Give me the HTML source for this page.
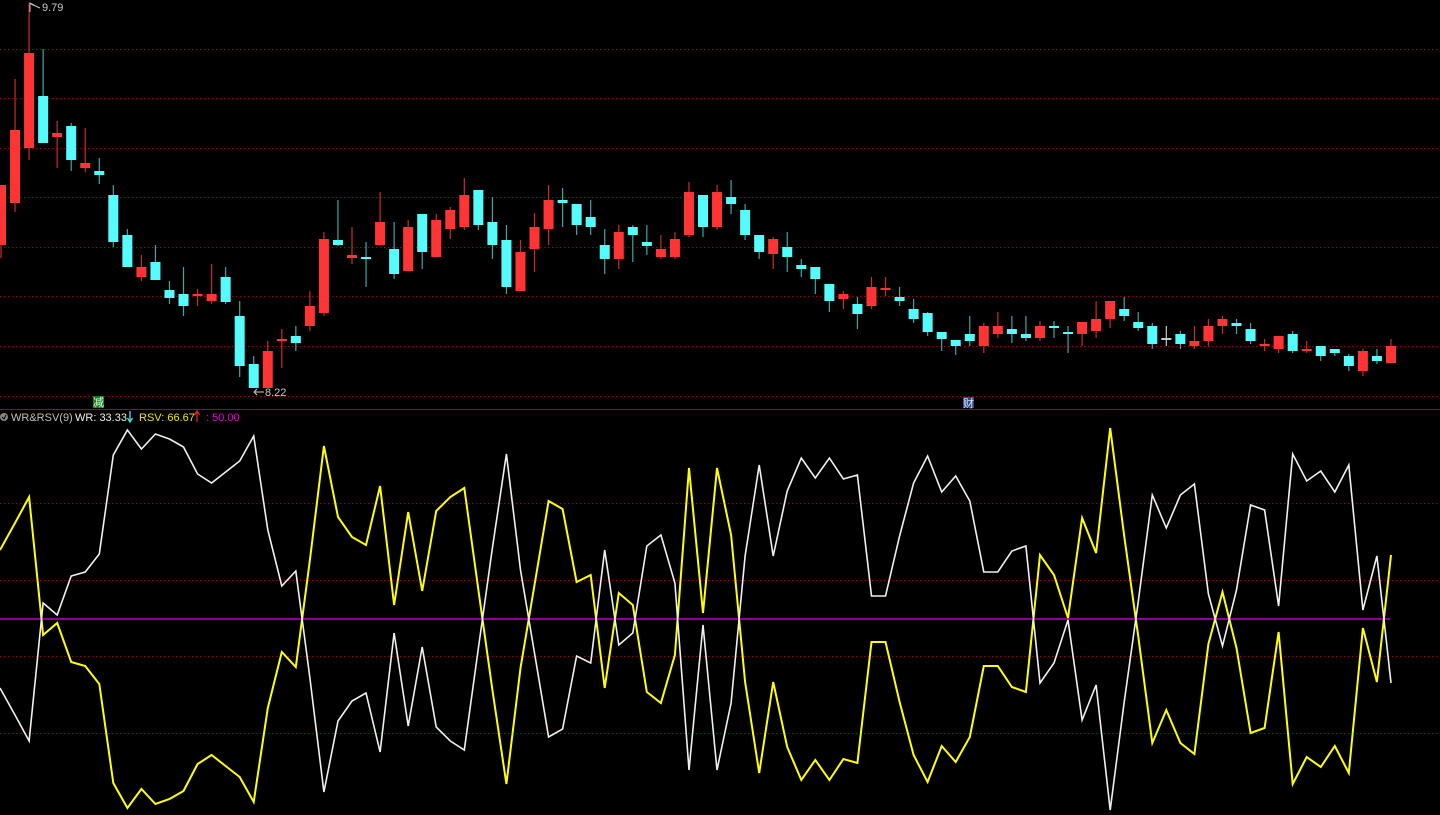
<!DOCTYPE html>
<html><head><meta charset="utf-8">
<style>
html,body{margin:0;padding:0;background:#000;width:1440px;height:815px;overflow:hidden}
svg{position:absolute;left:0;top:0}
.t{font-family:"Liberation Sans","Noto Sans CJK SC",sans-serif;font-size:11px}
</style></head><body>
<svg id="s" width="1440" height="815" xmlns="http://www.w3.org/2000/svg">
<g stroke="#a00000" stroke-width="1" stroke-dasharray="1.5,2.5">
<line x1="0" y1="49.5" x2="1440" y2="49.5"/><line x1="0" y1="98.5" x2="1440" y2="98.5"/>
<line x1="0" y1="148.5" x2="1440" y2="148.5"/><line x1="0" y1="197.5" x2="1440" y2="197.5"/>
<line x1="0" y1="247.5" x2="1440" y2="247.5"/><line x1="0" y1="296.5" x2="1440" y2="296.5"/>
<line x1="0" y1="346.5" x2="1440" y2="346.5"/><line x1="0" y1="396.5" x2="1440" y2="396.5"/>
<line x1="0" y1="503.5" x2="1440" y2="503.5"/><line x1="0" y1="580.5" x2="1440" y2="580.5"/>
<line x1="0" y1="656.5" x2="1440" y2="656.5"/><line x1="0" y1="733.5" x2="1440" y2="733.5"/>
</g>
<line x1="0" y1="409.5" x2="1440" y2="409.5" stroke="#b00000" stroke-width="1"/>
<g id="c"></g>
<line x1="0" y1="619" x2="1390" y2="619" stroke="#c000c0" stroke-width="1.5"/>
<polyline id="y" fill="none" stroke="#ffff00" stroke-width="2"/>
<polyline id="w" fill="none" stroke="#f0f0f0" stroke-width="1.6"/>
<text x="42" y="11" class="t" fill="#c8c8c8">9.79</text>
<path d="M30 12 L30 3 L34 5 M31 4 L40 8" stroke="#c8c8c8" fill="none" stroke-width="1"/>
<text x="265" y="396" class="t" fill="#c8c8c8">8.22</text>
<path d="M255 392 L264 392 M257 389 L254 392 L257 395" stroke="#c8c8c8" fill="none" stroke-width="1"/>
<rect x="93" y="396" width="11" height="12" fill="#1e7a1e"/>
<text x="93" y="406" class="t" font-size="10" fill="#e0ffe0">减</text>
<rect x="963" y="397" width="11" height="11" fill="#2a4a80"/>
<text x="963" y="407" class="t" font-size="10" fill="#e0e8ff">财</text>
<circle cx="4" cy="417" r="4" fill="#888"/>
<path d="M2 417 L4 419 L6 415" stroke="#000" fill="none" stroke-width="1"/>
<text x="11" y="421" class="t" fill="#c0c0c0">WR&amp;RSV(9)</text>
<text x="75" y="421" class="t" fill="#f0f0f0">WR: 33.33</text>
<path d="M130 411 L130 421 M127.5 418 L130 422 L132.5 418" stroke="#40e0e0" fill="none" stroke-width="1.3"/>
<text x="139" y="421" class="t" fill="#e8e800">RSV: 66.67</text>
<path d="M197 412 L197 422 M194.5 415 L197 411 L199.5 415" stroke="#e02020" fill="none" stroke-width="1.3"/>
<text x="206" y="421" class="t" fill="#e000e0">: 50.00</text>
</svg>
<script>
var D=[[185,245,185,258,'r'],[130,203,79,212,'r'],[53,148,3,160,'r'],[96,143,49,143,'c'],[133,137,121,168,'r'],[126,160,123,171,'c'],[163,168,128,172,'r'],[171,175,158,184,'c'],[195,242,185,247,'c'],[235,267,229,267,'c'],
[267,277,255,281,'r'],[262,280,245,280,'c'],[290,298,281,304,'c'],[294,306,267,316,'c'],[294,296,289,306,'r'],[294,301,264,304,'r'],[277,302,267,304,'c'],[316,366,301,377,'c'],[364,388,356,388,'c'],[351,388,341,388,'r'],
[339,341,329,368,'r'],[336,343,326,351,'c'],[306,326,291,331,'r'],[239,313,232,316,'r'],[240,245,200,246,'c'],[255,258,227,264,'r'],[257,259,242,287,'c'],[222,245,192,245,'r'],[249,274,222,279,'c'],[227,271,220,271,'r'],
[214,252,214,269,'c'],[220,257,214,257,'r'],[210,229,207,239,'r'],[195,227,178,230,'r'],[190,225,190,230,'c'],[222,245,197,259,'c'],[240,287,225,294,'c'],[252,291,240,291,'r'],[227,249,213,272,'r'],[200,229,185,245,'r'],
[200,203,188,227,'c'],[204,225,204,235,'c'],[217,227,200,235,'c'],[245,259,229,274,'c'],[232,259,225,269,'r'],[227,235,225,262,'c'],[242,246,225,255,'c'],[249,257,235,259,'r'],[239,257,232,259,'r'],[192,235,182,237,'r'],
[195,227,195,237,'c'],[192,227,185,230,'r'],[197,204,180,214,'c'],[210,235,204,240,'c'],[235,252,235,259,'c'],[239,254,237,269,'r'],[247,257,232,272,'c'],[265,269,259,277,'c'],[267,279,267,294,'c'],[284,301,284,312,'c'],
[294,299,291,309,'r'],[304,314,297,329,'c'],[287,306,277,309,'r'],[288,290,277,296,'r'],[297,301,287,306,'c'],[309,319,299,323,'c'],[313,332,312,336,'c'],[332,339,332,351,'c'],[340,346,340,355,'c'],[334,341,316,346,'c'],
[326,346,323,353,'r'],[326,334,312,338,'r'],[329,334,316,343,'c'],[334,338,316,341,'c'],[326,338,321,341,'r'],[326,328,321,338,'c'],[332,334,326,353,'c'],[322,334,322,346,'r'],[319,331,301,338,'r'],[301,319,301,328,'r'],
[309,316,297,321,'c'],[322,328,312,331,'c'],[326,344,323,349,'c'],[338,340,326,346,'g'],[334,344,331,349,'c'],[341,346,326,349,'r'],[326,341,319,346,'r'],[319,326,316,334,'r'],[323,326,319,334,'c'],[329,341,323,344,'c'],
[344,346,339,351,'r'],[336,349,336,353,'r'],[334,351,331,353,'c'],[349,351,341,353,'r'],[346,356,346,361,'c'],[349,353,349,356,'c'],[356,366,354,371,'c'],[351,371,349,376,'r'],[356,361,349,364,'c'],[346,363,339,363,'r']];
var col={r:['#ff3535','#d02828'],c:['#55fcfc','#3aa8a8'],g:['#c8c8c8','#c8c8c8']};
var h='';
for(var i=0;i<D.length;i++){var d=D[i],x=1+i*14.04,k=col[d[4]];var bh=Math.max(2,d[1]-d[0]);
h+='<line x1="'+x+'" x2="'+x+'" y1="'+d[2]+'" y2="'+d[3]+'" stroke="'+k[1]+'" stroke-width="1.2"/>';
h+='<rect x="'+(x-5)+'" y="'+d[0]+'" width="10" height="'+bh+'" fill="'+k[0]+'"/>';}
document.getElementById('c').innerHTML=h;
var Y=[550,523,497,635,623,662,666,684,783,808,789,804,799,791,764,755,766,777,802,708,652,667,560,446,517,537,545,486,605,512,591,511,497,488,590,
690,784,668,585,501,509,582,575,688,593,605,692,703,655,468,613,468,535,682,773,682,747,780,760,780,759,763,642,642,702,755,782,746,
762,737,666,666,687,692,555,575,618,518,553,428,536,636,743,710,743,754,644,592,648,733,728,632,784,757,767,746,773,628,682,555];
var py='',pw='';
for(var j=0;j<Y.length;j++){var x=(j==0?0:1+j*14.04);py+=x.toFixed(1)+','+Y[j]+' ';pw+=x.toFixed(1)+','+(1238-Y[j])+' ';}
document.getElementById('y').setAttribute('points',py);
document.getElementById('w').setAttribute('points',pw);
</script>
</body></html>
